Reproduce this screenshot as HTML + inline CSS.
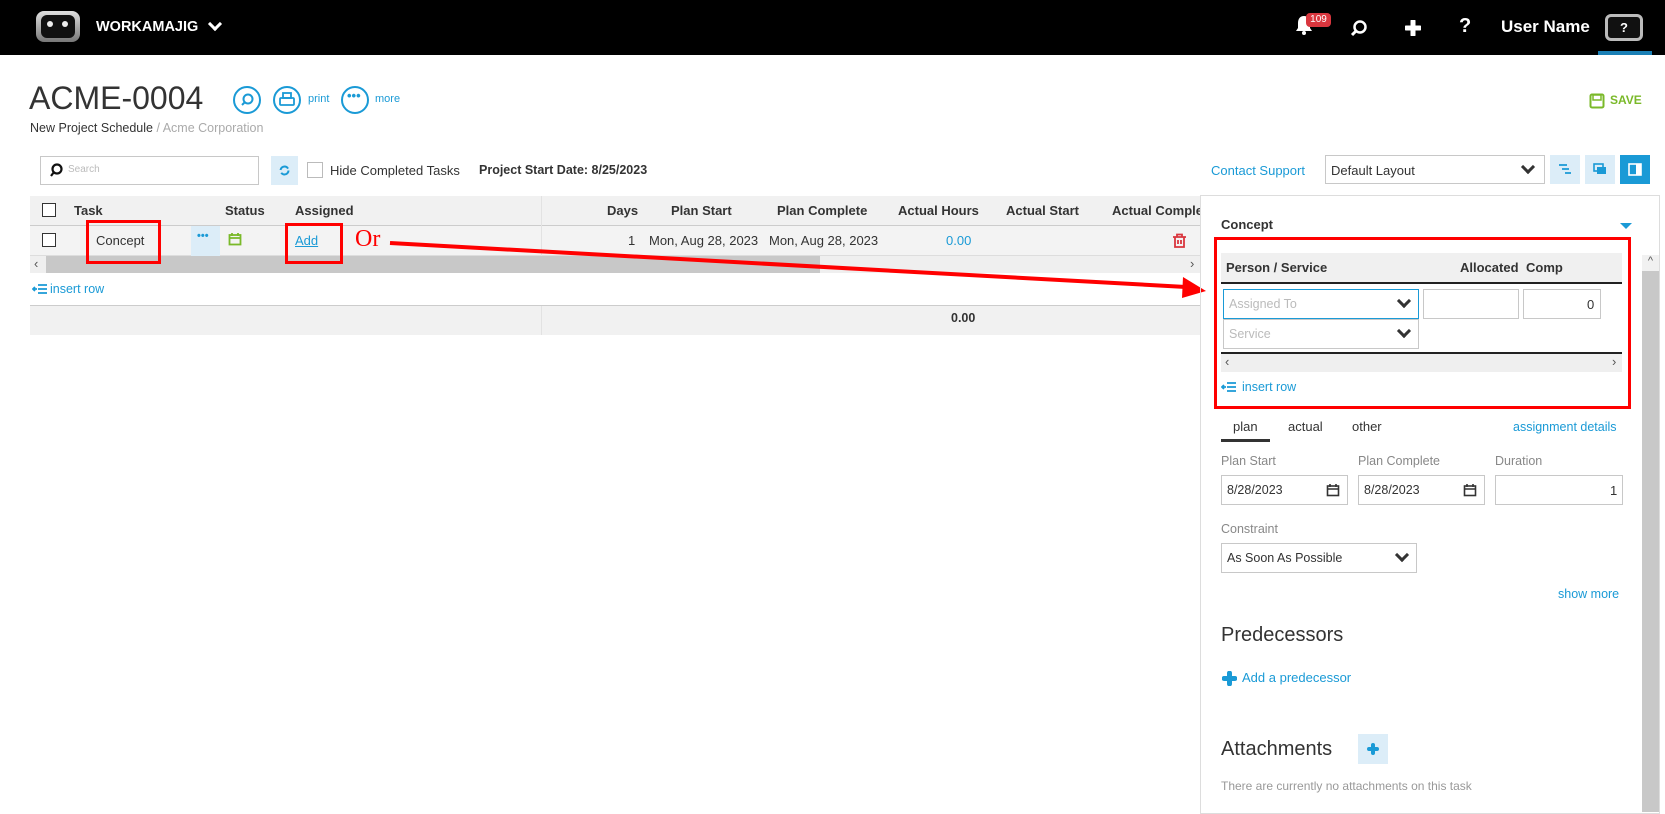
<!DOCTYPE html>
<html><head><meta charset="utf-8"><style>
*{box-sizing:border-box;margin:0;padding:0}
body{width:1665px;height:814px;position:relative;overflow:hidden;background:#fff;font-family:"Liberation Sans",Arial,sans-serif;color:#333;font-size:13px}
.a{position:absolute;white-space:nowrap}
.blue{color:#1a9ad6}
.b{font-weight:bold}
.inp{position:absolute;border:1px solid #c8c8c8;background:#fff}
.chev{position:absolute;width:10px;height:10px;border-right:3.5px solid #333;border-bottom:3.5px solid #333;transform:rotate(45deg)}
.cb{position:absolute;width:14px;height:14px;border:1.5px solid #333;background:#fff}
.red{position:absolute;border:3px solid #f00}
.circ{position:absolute;width:28px;height:28px;border:2px solid #1a9ad6;border-radius:50%}
</style></head><body>
<!-- top bar -->
<div class="a" style="left:0;top:0;width:1665px;height:55px;background:#000"></div>
<div class="a" style="left:36px;top:11px;width:44px;height:31px;border-radius:8px;background:linear-gradient(#e0e0e0,#777);"></div>
<div class="a" style="left:41px;top:15px;width:34px;height:23px;border-radius:6px;background:#111"></div>
<div class="a" style="left:47px;top:21px;width:6px;height:6px;border-radius:50%;background:#eee"></div>
<div class="a" style="left:62px;top:21px;width:6px;height:6px;border-radius:50%;background:#eee"></div>
<div class="a b" style="left:96px;top:19px;color:#fff;font-size:14.5px">WORKAMAJIG</div>
<div class="chev" style="left:210px;top:19px;border-color:#fff"></div>
<svg class="a" style="left:1295px;top:15px" width="18" height="20" viewBox="0 0 18 20"><path d="M9 1c-4 0-6 3-6 7v5l-2 3h16l-2-3V8c0-4-2-7-6-7z" fill="#fff"/><circle cx="9" cy="18" r="2" fill="#fff"/></svg>
<div class="a" style="left:1306px;top:13px;width:25px;height:14px;background:#d9363e;border-radius:4px;color:#fff;font-size:10px;text-align:center;line-height:14px">109</div>
<svg class="a" style="left:1350px;top:19px" width="18" height="18"><circle cx="10" cy="8" r="5.5" stroke="#fff" stroke-width="2.5" fill="none"/><path d="M6 12l-4 4" stroke="#fff" stroke-width="3"/></svg>
<svg class="a" style="left:1405px;top:20px" width="16" height="16"><path d="M8 1v14M1 8h14" stroke="#fff" stroke-width="5" stroke-linecap="round"/></svg>
<div class="a b" style="left:1459px;top:15px;color:#fff;font-size:20px">?</div>
<div class="a b" style="left:1501px;top:17px;color:#fff;font-size:17px">User Name</div>
<div class="a" style="left:1605px;top:14px;width:38px;height:27px;border:3px solid #bbb;border-radius:6px;background:#111;color:#fff;font-weight:bold;font-size:13px;text-align:center;line-height:21px">?</div>
<div class="a" style="left:1598px;top:51px;width:54px;height:4px;background:#1a7fb5"></div>
<!-- title -->
<div class="a" style="left:29px;top:80px;font-size:32px;color:#333">ACME-0004</div>
<div class="circ" style="left:233px;top:86px"></div>
<svg class="a" style="left:238px;top:91px" width="18" height="18"><circle cx="10" cy="8" r="4.5" stroke="#1a9ad6" stroke-width="2" fill="none"/><path d="M7 11l-3 3" stroke="#1a9ad6" stroke-width="2"/></svg>
<div class="circ" style="left:273px;top:86px"></div>
<svg class="a" style="left:279px;top:92px" width="16" height="16"><rect x="4" y="1" width="8" height="5" stroke="#1a9ad6" stroke-width="1.8" fill="none"/><rect x="1" y="6" width="14" height="7" rx="1" stroke="#1a9ad6" stroke-width="1.8" fill="none"/></svg>
<div class="a blue" style="left:308px;top:93px;font-size:11px">print</div>
<div class="circ" style="left:341px;top:86px"></div>
<div class="a blue b" style="left:347px;top:88px;font-size:13px">•••</div>
<div class="a blue" style="left:375px;top:93px;font-size:11px">more</div>
<div class="a" style="left:30px;top:121px;font-size:12.5px">New Project Schedule <span style="color:#aaa">/ Acme Corporation</span></div>
<svg class="a" style="left:1589px;top:93px" width="17" height="16"><rect x="1.5" y="1.5" width="13" height="13" rx="1.5" stroke="#7ab929" stroke-width="2" fill="none"/><rect x="4" y="2" width="8" height="5" stroke="#7ab929" stroke-width="1.5" fill="none"/></svg>
<div class="a b" style="left:1610px;top:93px;color:#7ab929;font-size:12px">SAVE</div>
<!-- toolbar -->
<div class="inp" style="left:40px;top:156px;width:219px;height:29px"></div>
<svg class="a" style="left:48px;top:162px" width="16" height="16"><circle cx="9" cy="7" r="4.5" stroke="#111" stroke-width="2.2" fill="none"/><path d="M6 10l-3 4" stroke="#111" stroke-width="2.2"/></svg>
<div class="a" style="left:68px;top:164px;font-size:10px;color:#bbb">Search</div>
<div class="a" style="left:271px;top:156px;width:27px;height:29px;background:#dcedf8"></div>
<svg class="a" style="left:278px;top:164px" width="13" height="13"><circle cx="6.5" cy="6.5" r="4" stroke="#1a9ad6" stroke-width="2" fill="none" stroke-dasharray="10 3"/></svg>
<div class="a" style="left:307px;top:162px;width:16px;height:16px;border:1px solid #bbb"></div>
<div class="a" style="left:330px;top:163px;font-size:13px">Hide Completed Tasks</div>
<div class="a b" style="left:479px;top:163px;font-size:12.5px">Project Start Date: 8/25/2023</div>
<div class="a blue" style="left:1211px;top:163px;font-size:13px">Contact Support</div>
<div class="inp" style="left:1325px;top:155px;width:220px;height:29px"></div>
<div class="a" style="left:1331px;top:163px;font-size:13px">Default Layout</div>
<div class="chev" style="left:1523px;top:162px"></div>
<div class="a" style="left:1550px;top:155px;width:30px;height:29px;background:#dcedf8"></div>
<svg class="a" style="left:1558px;top:163px" width="14" height="12"><path d="M1 2h8M4 6h7M7 10h6" stroke="#1a9ad6" stroke-width="1.8"/></svg>
<div class="a" style="left:1585px;top:155px;width:30px;height:29px;background:#dcedf8"></div>
<svg class="a" style="left:1593px;top:163px" width="14" height="12"><rect x="1" y="1" width="9" height="7" stroke="#1a9ad6" stroke-width="1.6" fill="none"/><rect x="4" y="4" width="9" height="7" fill="#1a9ad6"/></svg>
<div class="a" style="left:1620px;top:155px;width:30px;height:29px;background:#1a9ad6"></div>
<svg class="a" style="left:1628px;top:163px" width="14" height="13"><rect x="1" y="1" width="12" height="11" stroke="#fff" stroke-width="1.6" fill="none"/><rect x="8" y="1" width="5" height="11" fill="#fff"/></svg>
<!-- table -->
<div class="a" style="left:30px;top:196px;width:1170px;height:30px;background:#f1f1f1;border-bottom:1px solid #ccc"></div>
<div class="a" style="left:30px;top:226px;width:1170px;height:30px;background:#f3f3f3;border-bottom:1px solid #ddd"></div>
<div class="a" style="left:541px;top:196px;width:1px;height:60px;background:#e2e2e2"></div>
<div class="cb" style="left:42px;top:203px"></div>
<div class="a b" style="left:74px;top:203px">Task</div>
<div class="a b" style="left:225px;top:203px">Status</div>
<div class="a b" style="left:295px;top:203px">Assigned</div>
<div class="a b" style="left:607px;top:203px">Days</div>
<div class="a b" style="left:671px;top:203px">Plan Start</div>
<div class="a b" style="left:777px;top:203px">Plan Complete</div>
<div class="a b" style="left:898px;top:203px">Actual Hours</div>
<div class="a b" style="left:1006px;top:203px">Actual Start</div>
<div class="a b" style="left:1112px;top:203px;width:88px;overflow:hidden">Actual Complete</div>
<div class="cb" style="left:42px;top:233px"></div>
<div class="a" style="left:96px;top:233px">Concept</div>
<div class="a" style="left:191px;top:226px;width:29px;height:30px;background:#dcedf8"></div>
<div class="a blue b" style="left:197px;top:230px;font-size:11px">•••</div>
<svg class="a" style="left:228px;top:232px" width="14" height="14"><rect x="1.5" y="3" width="11" height="9.5" stroke="#7ab929" stroke-width="1.8" fill="none"/><path d="M1.5 6h11M4 1v3M10 1v3" stroke="#7ab929" stroke-width="1.8"/></svg>
<div class="a blue" style="left:295px;top:233px;text-decoration:underline">Add</div>
<div class="a" style="left:628px;top:233px">1</div>
<div class="a" style="left:649px;top:233px">Mon, Aug 28, 2023</div>
<div class="a" style="left:769px;top:233px">Mon, Aug 28, 2023</div>
<div class="a blue" style="left:946px;top:233px">0.00</div>
<svg class="a" style="left:1172px;top:233px" width="15" height="16"><path d="M1 4h13M5 4V1.5h5V4M3 4v10h9V4M6 7v4M9 7v4" stroke="#d9363e" stroke-width="1.8" fill="none"/></svg>
<div class="a" style="left:30px;top:256px;width:1170px;height:17px;background:#efefef"></div>
<div class="a" style="left:46px;top:256px;width:774px;height:17px;background:#c8c8c8"></div>
<div class="a" style="left:34px;top:256px;font-size:13px;color:#555">‹</div>
<div class="a" style="left:1190px;top:256px;font-size:13px;color:#555">›</div>
<svg class="a" style="left:32px;top:283px" width="16" height="13"><path d="M6 2h9M6 6h9M6 10h9M1 6h4M3 4l-2 2 2 2" stroke="#1a9ad6" stroke-width="1.8" fill="none"/></svg>
<div class="a blue" style="left:50px;top:282px;font-size:12.5px">insert row</div>
<div class="a" style="left:30px;top:305px;width:1170px;height:30px;background:#f1f1f1;border-top:1px solid #ccc"></div>
<div class="a" style="left:541px;top:306px;width:1px;height:29px;background:#e2e2e2"></div>
<div class="a b" style="left:951px;top:311px;font-size:12.5px">0.00</div>
<!-- red annotations -->
<div class="red" style="left:86px;top:220px;width:75px;height:44px"></div>
<div class="red" style="left:285px;top:223px;width:58px;height:41px"></div>
<div class="a" style="left:355px;top:226px;font-family:'Liberation Serif',serif;font-size:24px;color:#f00">Or</div>
<svg class="a" style="left:0;top:0" width="1665" height="814"><path d="M390 243L1186 287" stroke="#f00" stroke-width="4"/><path d="M1206 291L1183 277L1182 298Z" fill="#f00"/></svg>
<!-- side panel -->
<div class="a" style="left:1200px;top:195px;width:460px;height:619px;border:1.5px solid #ddd"></div>
<div class="a b" style="left:1221px;top:217px;font-size:13px">Concept</div>
<div class="a" style="left:1620px;top:223px;width:0;height:0;border-left:6px solid transparent;border-right:6px solid transparent;border-top:6px solid #1a9ad6"></div>
<div class="a" style="left:1642px;top:255px;width:17px;height:557px;background:#c8c8c8"></div>
<div class="a" style="left:1642px;top:255px;width:17px;height:16px;background:#f1f1f1;color:#555;font-size:11px;text-align:center">^</div>
<div class="red" style="left:1214px;top:237px;width:417px;height:172px"></div>
<div class="a" style="left:1221px;top:253px;width:401px;height:31px;background:#f0f0f0;border-bottom:2px solid #222"></div>
<div class="a b" style="left:1226px;top:260px;font-size:13px">Person / Service</div>
<div class="a b" style="left:1460px;top:260px;font-size:13px">Allocated</div>
<div class="a b" style="left:1526px;top:260px;font-size:13px">Comp</div>
<div class="inp" style="left:1223px;top:289px;width:196px;height:30px;border-color:#1a9ad6"></div>
<div class="a" style="left:1229px;top:297px;color:#bbb;font-size:12.5px">Assigned To</div>
<div class="chev" style="left:1399px;top:296px"></div>
<div class="inp" style="left:1423px;top:289px;width:96px;height:30px"></div>
<div class="inp" style="left:1523px;top:289px;width:78px;height:30px"></div>
<div class="a" style="left:1587px;top:297px">0</div>
<div class="inp" style="left:1223px;top:319px;width:196px;height:30px"></div>
<div class="a" style="left:1229px;top:327px;color:#bbb;font-size:12.5px">Service</div>
<div class="chev" style="left:1399px;top:326px"></div>
<div class="a" style="left:1221px;top:352px;width:401px;height:20px;background:#efefef;border-top:2px solid #222"></div>
<div class="a" style="left:1225px;top:354px;color:#555">‹</div>
<div class="a" style="left:1612px;top:354px;color:#555">›</div>
<svg class="a" style="left:1221px;top:381px" width="16" height="13"><path d="M6 2h9M6 6h9M6 10h9M1 6h4M3 4l-2 2 2 2" stroke="#1a9ad6" stroke-width="1.8" fill="none"/></svg>
<div class="a blue" style="left:1242px;top:380px;font-size:12.5px">insert row</div>
<div class="a" style="left:1233px;top:419px;font-size:13px">plan</div>
<div class="a" style="left:1288px;top:419px;font-size:13px">actual</div>
<div class="a" style="left:1352px;top:419px;font-size:13px">other</div>
<div class="a" style="left:1221px;top:439px;width:49px;height:3px;background:#333"></div>
<div class="a blue" style="left:1513px;top:420px;font-size:12.5px">assignment details</div>
<div class="a" style="left:1221px;top:454px;color:#888;font-size:12.5px">Plan Start</div>
<div class="a" style="left:1358px;top:454px;color:#888;font-size:12.5px">Plan Complete</div>
<div class="a" style="left:1495px;top:454px;color:#888;font-size:12.5px">Duration</div>
<div class="inp" style="left:1221px;top:475px;width:127px;height:30px"></div>
<div class="a" style="left:1227px;top:483px;font-size:12.5px">8/28/2023</div>
<div class="inp" style="left:1358px;top:475px;width:127px;height:30px"></div>
<div class="a" style="left:1364px;top:483px;font-size:12.5px">8/28/2023</div>
<svg class="a" style="left:1326px;top:483px" width="14" height="14"><rect x="1.5" y="3" width="11" height="9.5" stroke="#333" stroke-width="1.6" fill="none"/><path d="M1.5 6h11M4 1v3M10 1v3" stroke="#333" stroke-width="1.6"/></svg>
<svg class="a" style="left:1463px;top:483px" width="14" height="14"><rect x="1.5" y="3" width="11" height="9.5" stroke="#333" stroke-width="1.6" fill="none"/><path d="M1.5 6h11M4 1v3M10 1v3" stroke="#333" stroke-width="1.6"/></svg>
<div class="inp" style="left:1495px;top:475px;width:128px;height:30px"></div>
<div class="a" style="left:1610px;top:483px">1</div>
<div class="a" style="left:1221px;top:522px;color:#888;font-size:12.5px">Constraint</div>
<div class="inp" style="left:1221px;top:543px;width:196px;height:30px"></div>
<div class="a" style="left:1227px;top:551px;font-size:12.5px">As Soon As Possible</div>
<div class="chev" style="left:1397px;top:550px"></div>
<div class="a blue" style="left:1558px;top:587px;font-size:12.5px">show more</div>
<div class="a" style="left:1221px;top:624px;font-size:20px">Predecessors</div>
<svg class="a" style="left:1222px;top:671px" width="15" height="15"><path d="M7.5 2v11M2 7.5h11" stroke="#1a9ad6" stroke-width="5" stroke-linecap="round"/></svg>
<div class="a blue" style="left:1242px;top:670px;font-size:13px">Add a predecessor</div>
<div class="a" style="left:1221px;top:738px;font-size:20px">Attachments</div>
<div class="a" style="left:1358px;top:734px;width:30px;height:30px;background:#dcedf8"></div>
<svg class="a" style="left:1367px;top:743px" width="12" height="12"><path d="M6 2v8M2 6h8" stroke="#1a9ad6" stroke-width="4" stroke-linecap="round"/></svg>
<div class="a" style="left:1221px;top:779px;color:#999;font-size:12px">There are currently no attachments on this task</div>
</body></html>
